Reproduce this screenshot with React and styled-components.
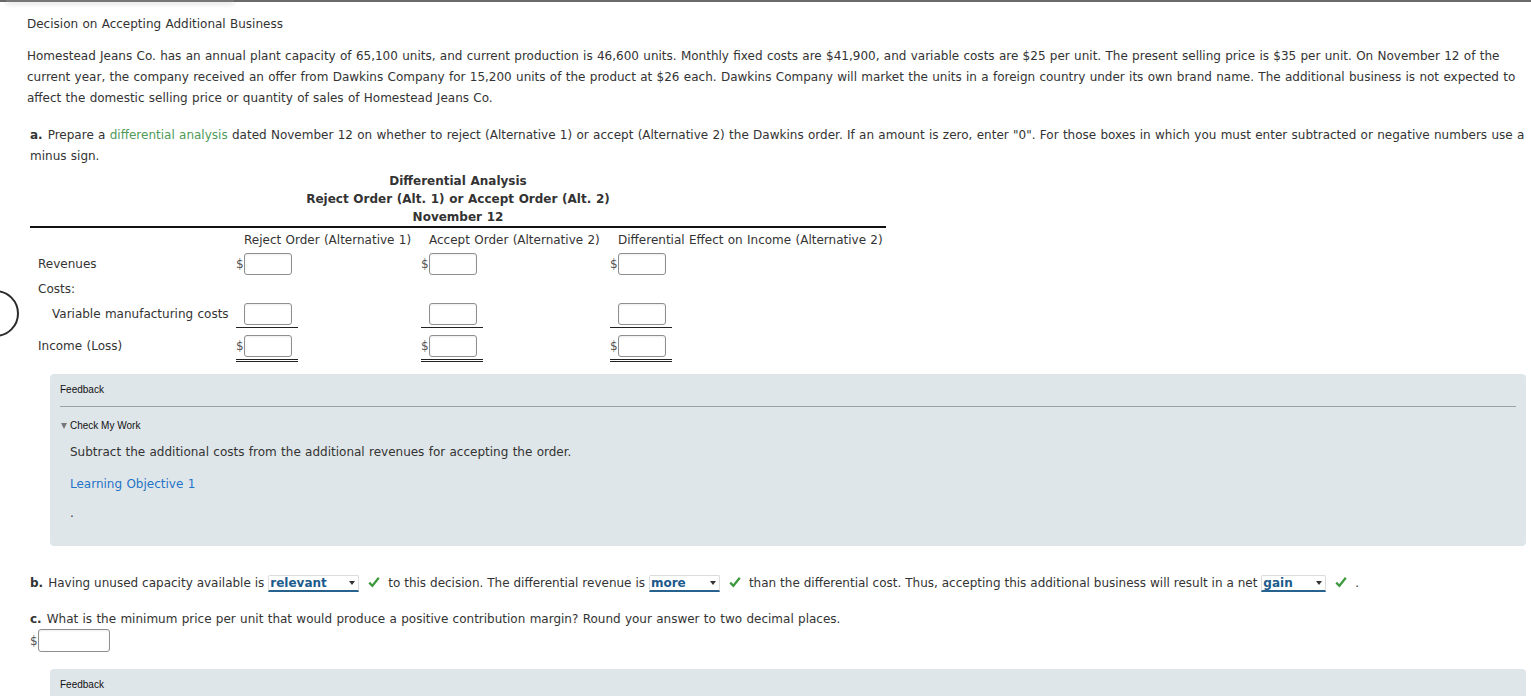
import React from 'react';
import styled, { createGlobalStyle } from 'styled-components';

const GlobalStyle = createGlobalStyle`
  body {
    margin: 0;
    font-family: "DejaVu Sans", Verdana, sans-serif;
    font-size: 12px;
    word-spacing: 0.5px;
    color: #333;
    background: #fff;
  }
`;

const Shell = styled.div`
  position: relative;
  min-height: 696px;
  overflow: hidden;
`;

const TopBar = styled.div`
  height: 2px;
  background: #6a6a6a;
`;

const TabShadow = styled.div`
  position: absolute;
  top: 0;
  left: 6px;
  width: 228px;
  height: 2px;
  background: #777;
  box-shadow: 0 2px 4px rgba(0, 0, 0, 0.18);
`;

const SideCircle = styled.div`
  position: absolute;
  left: -28px;
  top: 290px;
  width: 43px;
  height: 43px;
  border: 2px solid #2b2b2b;
  border-radius: 50%;
`;

const Page = styled.div`
  padding: 12px 5px 0 27px;
`;

const Title = styled.div`
  line-height: 21px;
`;

const Para = styled.p`
  margin: ${p => p.$mt || 0}px 0 0;
  line-height: 21px;
`;

const Part = styled.div`
  padding-left: 3px;
  margin-top: ${p => p.$mt || 0}px;
`;

const PartText = styled.p`
  margin: ${p => p.$mt || 0}px 0 0;
  line-height: 21px;
  word-spacing: ${p => (p.$tight ? '0.1px' : '0.5px')};
`;

const Letter = styled.b`
  font-weight: bold;
  padding-right: 5px;
`;

const GreenLink = styled.span`
  color: #4f9a58;
`;

const Sheet = styled.div`
  width: 856px;
  margin-top: 5px;
`;

const SheetTitle = styled.div`
  text-align: center;
  font-weight: bold;
  line-height: 18px;
  border-bottom: 2px solid #111;
`;

const Row = styled.div`
  display: grid;
  grid-template-columns: 206px 185px 189px 276px;
  align-items: start;
  height: ${p => p.$h}px;
`;

const HeadCell = styled.div`
  padding-left: 8px;
  line-height: 24px;
  white-space: nowrap;
`;

const Label = styled.div`
  margin-top: 2px;
  line-height: 22px;
  padding-left: ${p => (p.$indent ? 22 : 8)}px;
  white-space: nowrap;
`;

const Amount = styled.div`
  display: flex;
  align-items: center;
  width: 62px;
  padding-top: 2px;
  padding-bottom: 2px;
  border-bottom: ${p =>
    p.$rule === 'single' ? '1px solid #222' : p.$rule === 'double' ? '3px double #222' : '0'};
`;

const Dollar = styled.span`
  width: 8px;
  font-size: 12px;
  color: #555;
  line-height: 22px;
`;

const Box = styled.input`
  box-sizing: border-box;
  width: ${p => p.$w || 48}px;
  height: ${p => p.$h || 22}px;
  margin: 0 0 0 ${p => (p.$noDollar ? 8 : 0)}px;
  padding: 0 4px;
  border: 1px solid #8f8f8f;
  border-radius: 3px;
  background: #fff;
  box-shadow: inset 0 1px 2px rgba(0, 0, 0, 0.08);
  font: inherit;
`;

const Feedback = styled.div`
  margin: ${p => p.$mt}px 0 0 23px;
  background: #dfe6e9;
  border-radius: 4px;
  padding: 9px 10px 22px;
`;

const FeedbackHead = styled.div`
  font-family: "Liberation Sans", Arial, sans-serif;
  font-size: 10px;
  line-height: 14px;
  word-spacing: 0;
  color: #111;
  padding-bottom: 9px;
  border-bottom: 1px solid #9aa0a3;
`;

const CheckWork = styled.div`
  display: flex;
  align-items: center;
  margin-top: 12px;
  font-family: "Liberation Sans", Arial, sans-serif;
  font-size: 10px;
  line-height: 14px;
  word-spacing: 0;
  color: #111;
`;

const Caret = styled.span`
  display: inline-block;
  width: 0;
  height: 0;
  margin: 0 3px 0 1px;
  border-left: 3px solid transparent;
  border-right: 3px solid transparent;
  border-top: 6px solid #777;
`;

const FeedbackBody = styled.div`
  padding-left: 10px;
  margin-top: 9px;
`;

const FeedLine = styled.p`
  margin: ${p => p.$mt || 0}px 0 0;
  line-height: 21px;
`;

const BlueLink = styled.span`
  color: #1f74c6;
`;

const Select = styled.span`
  display: inline-flex;
  align-items: flex-start;
  justify-content: space-between;
  box-sizing: border-box;
  width: ${p => p.$w}px;
  height: 17px;
  padding: 0 3px 0 1px;
  vertical-align: baseline;
  border: 1px solid #dcdcdc;
  border-bottom: 2px solid #27628f;
  border-radius: 2px 2px 0 0;
  font-weight: bold;
  color: #1d5b8c;
  line-height: 14px;
`;

const SelectArrow = styled.span`
  width: 0;
  height: 0;
  margin-top: 5px;
  border-left: 3px solid transparent;
  border-right: 3px solid transparent;
  border-top: 4px solid #333;
`;

const Check = styled.svg`
  width: 12px;
  height: 12px;
  margin: 0 8px 0 9px;
  vertical-align: -1px;
`;

const AnswerRow = styled.div`
  display: flex;
  align-items: center;
  margin-top: -1px;
`;

function Tick() {
  return (
    <Check viewBox="0 0 12 12">
      <path d="M1.2 6.6 L4.4 9.8 L10.8 1.8" fill="none" stroke="#3c9a3c" strokeWidth="2.2" />
    </Check>
  );
}

function Dropdown({ value, width }) {
  return (
    <Select $w={width}>
      {value}
      <SelectArrow />
    </Select>
  );
}

function AmountInput({ dollar, rule }) {
  return (
    <Amount $rule={rule}>
      {dollar ? <Dollar>$</Dollar> : null}
      <Box type="text" $noDollar={!dollar} />
    </Amount>
  );
}

const rows = [
  { label: 'Revenues', h: 25, dollar: true },
  { label: 'Costs:', h: 25, empty: true },
  { label: 'Variable manufacturing costs', h: 32, indent: true, rule: 'single' },
  { label: 'Income (Loss)', h: 32, dollar: true, rule: 'double' },
];

export default function App() {
  return (
    <>
      <GlobalStyle />
      <Shell>
        <TopBar />
        <TabShadow />
        <SideCircle />
        <Page>
          <Title>Decision on Accepting Additional Business</Title>
          <Para $mt={11}>
            Homestead Jeans Co. has an annual plant capacity of 65,100 units, and current production is 46,600
            units. Monthly fixed costs are $41,900, and variable costs are $25 per unit. The present selling price is
            $35 per unit. On November 12 of the current year, the company received an offer from Dawkins Company
            for 15,200 units of the product at $26 each. Dawkins Company will market the units in a foreign country
            under its own brand name. The additional business is not expected to affect the domestic selling price
            or quantity of sales of Homestead Jeans Co.
          </Para>

          <Part $mt={16}>
            <PartText>
              <Letter>a.</Letter>Prepare a <GreenLink>differential analysis</GreenLink> dated November 12 on whether
              to reject (Alternative 1) or accept (Alternative 2) the Dawkins order. If an amount is zero, enter "0".
              For those boxes in which you must enter subtracted or negative numbers use a minus sign.
            </PartText>

            <Sheet>
              <SheetTitle>
                <div>Differential Analysis</div>
                <div>Reject Order (Alt. 1) or Accept Order (Alt. 2)</div>
                <div>November 12</div>
              </SheetTitle>
              <Row $h={23}>
                <div />
                <HeadCell>Reject Order (Alternative 1)</HeadCell>
                <HeadCell>Accept Order (Alternative 2)</HeadCell>
                <HeadCell>Differential Effect on Income (Alternative 2)</HeadCell>
              </Row>
              {rows.map(r => (
                <Row key={r.label} $h={r.h}>
                  <Label $indent={r.indent}>{r.label}</Label>
                  {r.empty
                    ? null
                    : [0, 1, 2].map(i => <AmountInput key={i} dollar={r.dollar} rule={r.rule} />)}
                </Row>
              ))}
            </Sheet>
          </Part>

          <Feedback $mt={9}>
            <FeedbackHead>Feedback</FeedbackHead>
            <CheckWork>
              <Caret />
              Check My Work
            </CheckWork>
            <FeedbackBody>
              <FeedLine>Subtract the additional costs from the additional revenues for accepting the order.</FeedLine>
              <FeedLine $mt={11}>
                <BlueLink>Learning Objective 1</BlueLink>
              </FeedLine>
              <FeedLine $mt={8}>.</FeedLine>
            </FeedbackBody>
          </Feedback>

          <Part $mt={27}>
            <PartText $tight>
              <Letter>b.</Letter>Having unused capacity available is <Dropdown value="relevant" width={91} />
              <Tick />
              to this decision. The differential revenue is <Dropdown value="more" width={71} />
              <Tick />
              than the differential cost. Thus, accepting this additional business will result in a net{' '}
              <Dropdown value="gain" width={65} />
              <Tick />.
            </PartText>
            <PartText $mt={15}>
              <Letter>c.</Letter>What is the minimum price per unit that would produce a positive contribution margin?
              Round your answer to two decimal places.
            </PartText>
            <AnswerRow>
              <Dollar>$</Dollar>
              <Box type="text" $w={72} $h={23} />
            </AnswerRow>
          </Part>

          <Feedback $mt={17}>
            <FeedbackHead>Feedback</FeedbackHead>
          </Feedback>
        </Page>
      </Shell>
    </>
  );
}
